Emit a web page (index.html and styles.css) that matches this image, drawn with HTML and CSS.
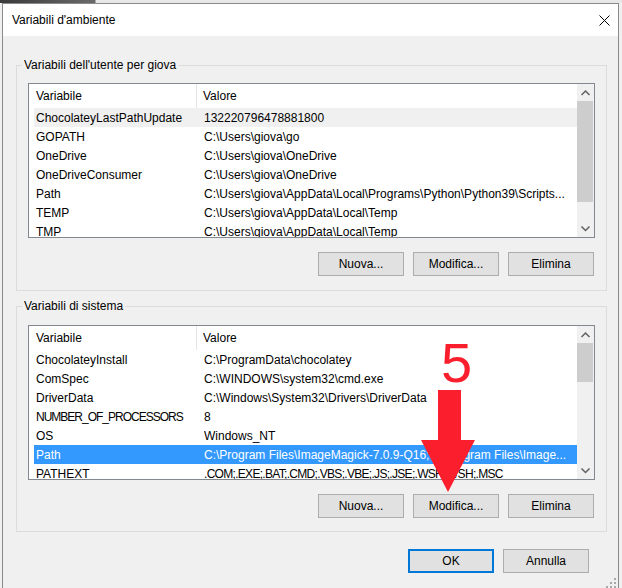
FILE: index.html
```html
<!DOCTYPE html>
<html lang="it">
<head>
<meta charset="utf-8">
<title>Variabili d'ambiente</title>
<link rel="stylesheet" href="styles.css">
</head>
<body>
<div class="behind"></div>
<div class="dialog">
  <div class="titlebar">
    <span class="title">Variabili d'ambiente</span>
    <svg class="close" width="11" height="11" viewBox="0 0 11 11"><path d="M0.5 0.5 L10.5 10.5 M10.5 0.5 L0.5 10.5" stroke="#000" stroke-width="1" fill="none"/></svg>
  </div>
  <div class="content">
    <fieldset class="group user">
      <legend>Variabili dell'utente per giova</legend>
      <div class="list">
        <div class="list-main">
          <div class="header"><div class="hcol c1">Variabile</div><div class="hcol c2">Valore</div></div>
          <div class="row dim"><span class="c1">ChocolateyLastPathUpdate</span><span class="c2">132220796478881800</span></div>
          <div class="row"><span class="c1">GOPATH</span><span class="c2">C:\Users\giova\go</span></div>
          <div class="row"><span class="c1">OneDrive</span><span class="c2">C:\Users\giova\OneDrive</span></div>
          <div class="row"><span class="c1">OneDriveConsumer</span><span class="c2">C:\Users\giova\OneDrive</span></div>
          <div class="row"><span class="c1">Path</span><span class="c2">C:\Users\giova\AppData\Local\Programs\Python\Python39\Scripts...</span></div>
          <div class="row"><span class="c1">TEMP</span><span class="c2">C:\Users\giova\AppData\Local\Temp</span></div>
          <div class="row"><span class="c1">TMP</span><span class="c2">C:\Users\giova\AppData\Local\Temp</span></div>
        </div>
        <div class="scrollbar">
          <div class="sb-arrow"><svg width="17" height="17" viewBox="0 0 17 17"><polyline points="4.5,11 8.5,7 12.5,11" fill="none" stroke="#606060" stroke-width="1.5"/></svg></div>
          <div class="sb-track"><div class="sb-thumb user-thumb"></div></div>
          <div class="sb-arrow"><svg width="17" height="17" viewBox="0 0 17 17"><polyline points="4.5,6.5 8.5,10.5 12.5,6.5" fill="none" stroke="#606060" stroke-width="1.5"/></svg></div>
        </div>
      </div>
      <div class="buttons">
        <button class="btn">Nuova...</button>
        <button class="btn">Modifica...</button>
        <button class="btn">Elimina</button>
      </div>
    </fieldset>

    <fieldset class="group sys">
      <legend>Variabili di sistema</legend>
      <div class="list">
        <div class="list-main">
          <div class="header"><div class="hcol c1">Variabile</div><div class="hcol c2">Valore</div></div>
          <div class="row"><span class="c1">ChocolateyInstall</span><span class="c2">C:\ProgramData\chocolatey</span></div>
          <div class="row"><span class="c1">ComSpec</span><span class="c2">C:\WINDOWS\system32\cmd.exe</span></div>
          <div class="row"><span class="c1">DriverData</span><span class="c2">C:\Windows\System32\Drivers\DriverData</span></div>
          <div class="row"><span class="c1 caps">NUMBER_OF_PROCESSORS</span><span class="c2">8</span></div>
          <div class="row"><span class="c1">OS</span><span class="c2">Windows_NT</span></div>
          <div class="row selected"><span class="c1">Path</span><span class="c2">C:\Program Files\ImageMagick-7.0.9-Q16;C:\Program Files\Image...</span></div>
          <div class="row"><span class="c1">PATHEXT</span><span class="c2 caps-soft">.COM;.EXE;.BAT;.CMD;.VBS;.VBE;.JS;.JSE;.WSF;.WSH;.MSC</span></div>
        </div>
        <div class="scrollbar">
          <div class="sb-arrow"><svg width="17" height="17" viewBox="0 0 17 17"><polyline points="4.5,11 8.5,7 12.5,11" fill="none" stroke="#606060" stroke-width="1.5"/></svg></div>
          <div class="sb-track"><div class="sb-thumb sys-thumb"></div></div>
          <div class="sb-arrow"><svg width="17" height="17" viewBox="0 0 17 17"><polyline points="4.5,6.5 8.5,10.5 12.5,6.5" fill="none" stroke="#606060" stroke-width="1.5"/></svg></div>
        </div>
      </div>
      <div class="buttons">
        <button class="btn">Nuova...</button>
        <button class="btn">Modifica...</button>
        <button class="btn">Elimina</button>
      </div>
    </fieldset>

    <div class="footer">
      <button class="btn default">OK</button>
      <button class="btn">Annulla</button>
    </div>
  </div>
  <div class="grip-row">
    <svg width="12" height="10" viewBox="0 0 12 10">
      <rect x="9" y="0" width="2" height="2" fill="#a8a8a8"/>
      <rect x="5" y="4" width="2" height="2" fill="#a8a8a8"/>
      <rect x="9" y="4" width="2" height="2" fill="#a8a8a8"/>
      <rect x="1" y="8" width="2" height="2" fill="#a8a8a8"/>
      <rect x="5" y="8" width="2" height="2" fill="#a8a8a8"/>
      <rect x="9" y="8" width="2" height="2" fill="#a8a8a8"/>
    </svg>
  </div>
</div>

<svg class="annotation" width="622" height="588" viewBox="0 0 622 588">
  <text x="441" y="382" class="step">5</text>
  <polygon points="438,390 461,390 461,440 475,440 448,492 421,440 438,440" fill="#fb1f2e"/>
</svg>
</body>
</html>
```

FILE: styles.css
```css
html, body {
  margin: 0;
  padding: 0;
}

body {
  width: 622px;
  height: 588px;
  overflow: hidden;
  background: #f0f0f0;
  font-family: "Liberation Sans", Arial, sans-serif;
  font-size: 12px;
  color: #000;
  position: relative;
}

.behind {
  height: 3px;
  background: linear-gradient(to right, #3a3a3a 0, #6a6a6a 95px, #e8e8e8 96px, #e8e8e8 100%);
}

.dialog {
  margin-left: 2px;
  width: 617px;
  box-sizing: border-box;
  border: 1px solid #8a8a8a;
  border-bottom: none;
  background: #f0f0f0;
  height: 585px;
}

.titlebar {
  height: 32px;
  background: #fff;
  display: flex;
  align-items: center;
  padding-left: 9px;
}

.title {
  line-height: 16px;
}

.close {
  margin-left: auto;
  margin-right: 8px;
}

.content {
  padding: 22px 11px 0 13px;
}

.group {
  margin: 0;
  min-width: 0;
  border: 1px solid #dcdcdc;
  padding: 10px 11px 14px 11px;
}

.group.sys {
  margin-top: 8px;
  padding-top: 11px;
  padding-bottom: 13px;
}

.group legend {
  line-height: 15px;
  padding: 0 2px;
  margin-left: -6px;
}

.list {
  height: 155px;
  box-sizing: border-box;
  border: 1px solid #828790;
  background: #fff;
  display: flex;
}

.list-main {
  flex: 1;
  min-width: 0;
  overflow: hidden;
}

.header {
  height: 24px;
  display: flex;
  align-items: center;
}

.hcol {
  line-height: 24px;
  white-space: nowrap;
}

.hcol.c1 {
  flex: 0 0 168px;
  box-sizing: border-box;
  padding-left: 7px;
  border-right: 1px solid #e5e5e5;
}

.hcol.c2 {
  padding-left: 6px;
}

.row {
  height: 19px;
  line-height: 21px;
  margin-left: 5px;
  display: flex;
  white-space: nowrap;
  overflow: hidden;
}

.row .c1 {
  flex: 0 0 170px;
  box-sizing: border-box;
  padding-left: 2px;
  overflow: hidden;
}

.row .c2 {
  flex: 1;
  min-width: 0;
  overflow: hidden;
}

.row .caps {
  letter-spacing: -1px;
}

.row .caps-soft {
  letter-spacing: -0.7px;
}

.row.dim {
  background: #f0f0f0;
}

.row.selected {
  background: #3399ff;
  color: #fff;
}

.scrollbar {
  flex: 0 0 17px;
  display: flex;
  flex-direction: column;
  background: #f0f0f0;
}

.sb-arrow {
  height: 17px;
  flex: 0 0 17px;
}

.sb-arrow svg {
  display: block;
}

.sb-track {
  flex: 1;
}

.sb-thumb {
  background: #cdcdcd;
  margin: 0 1px 0 0;
}

.user-thumb {
  height: 101px;
}

.sys-thumb {
  height: 39px;
}

.buttons {
  display: flex;
  justify-content: flex-end;
  gap: 9px;
  margin-top: 14px;
  padding-right: 1px;
}

.btn {
  width: 86px;
  height: 24px;
  box-sizing: border-box;
  background: #e1e1e1;
  border: 1px solid #adadad;
  border-radius: 0;
  font-family: "Liberation Sans", Arial, sans-serif;
  font-size: 12px;
  color: #000;
  padding: 0;
  margin: 0;
}

.btn.default {
  border: 2px solid #0078d7;
}

.footer {
  display: flex;
  justify-content: flex-end;
  gap: 9px;
  margin-top: 17px;
  padding-right: 18px;
}

.grip-row {
  display: flex;
  justify-content: flex-end;
  margin-top: 5px;
  padding-right: 1px;
}

.grip-row svg {
  display: block;
}

.annotation {
  position: absolute;
  left: 0;
  top: 0;
  pointer-events: none;
}

.step {
  font-family: "Liberation Sans", Arial, sans-serif;
  font-size: 56px;
  fill: #fb1f2e;
}
```
